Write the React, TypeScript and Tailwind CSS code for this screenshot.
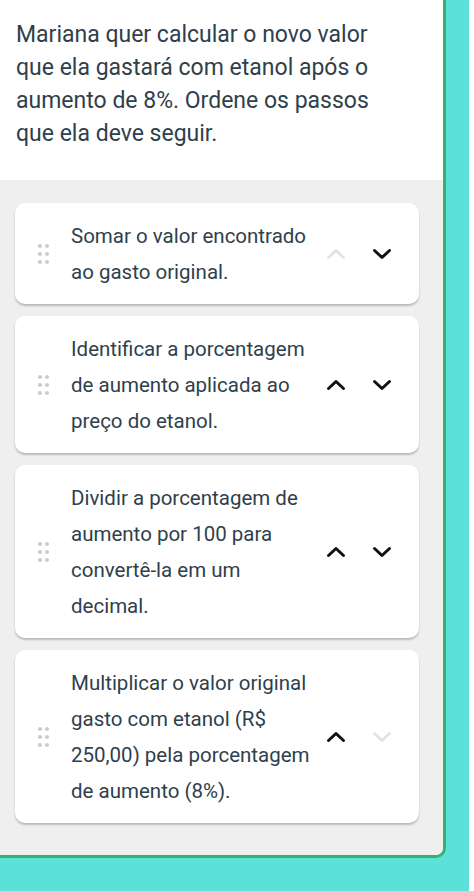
const steps = [
  { text: "Somar o valor encontrado ao gasto original.", up: false, down: true },
  { text: "Identificar a porcentagem de aumento aplicada ao preço do etanol.", up: true, down: true },
  { text: "Dividir a porcentagem de aumento por 100 para convertê-la em um decimal.", up: true, down: true },
  {
    text: "Multiplicar o valor original gasto com etanol (R$ 250,00) pela porcentagem de aumento (8%).",
    up: true,
    down: false,
  },
];

const Chevron = ({ dir, enabled }: { dir: "up" | "down"; enabled: boolean }) => (
  <svg
    width="20"
    height="12"
    viewBox="0 0 20 12"
    fill="none"
    stroke={enabled ? "#111111" : "#e3e3e3"}
    strokeWidth="3"
    strokeLinecap="round"
    strokeLinejoin="round"
  >
    {dir === "down" ? <polyline points="2.5,2.5 10,9.5 17.5,2.5" /> : <polyline points="2.5,9.5 10,2.5 17.5,9.5" />}
  </svg>
);

const Handle = () => (
  <div className="grid grid-cols-2 gap-x-[3px] gap-y-[4px]">
    {[0, 1, 2, 3, 4, 5].map((i) => (
      <span key={i} className="block w-[4px] h-[4px] rounded-full bg-[#cbcbcb]" />
    ))}
  </div>
);

export default function App() {
  return (
    <div className="w-[469px] h-[891px] bg-[#5be1d9] overflow-hidden" style={{ fontFamily: "Roboto, 'Noto Sans', sans-serif" }}>
      <div className="w-[446px] border-r-[3px] border-b-[3px] border-[#35b36e] rounded-br-[10px] overflow-hidden">
        <div className="bg-white pl-4 pr-[40px] pt-[18px] pb-[30px]">
          <p className="text-[23px] leading-[33px] text-[#2f3f4c]">
            Mariana quer calcular o novo valor que ela gastará com etanol após o aumento de 8%. Ordene os passos que ela deve seguir.
          </p>
        </div>
        <div className="bg-[#efefef] pl-[15px] pr-[24px] pt-[23px] pb-[32px] flex flex-col gap-3">
          {steps.map((s, i) => (
            <div
              key={i}
              className="bg-white rounded-[10px] shadow-[0_2px_2px_rgba(0,0,0,0.22)] flex items-center pl-[23px] pr-[14px] pt-[15px] pb-[14px]"
            >
              <Handle />
              <p className="flex-1 ml-[22px] text-[20.5px] leading-[36px] text-[#2f3f4c]">{s.text}</p>
              <button className="w-[46px] h-[40px] flex items-center justify-center">
                <Chevron dir="up" enabled={s.up} />
              </button>
              <button className="w-[46px] h-[40px] flex items-center justify-center">
                <Chevron dir="down" enabled={s.down} />
              </button>
            </div>
          ))}
        </div>
      </div>
    </div>
  );
}
